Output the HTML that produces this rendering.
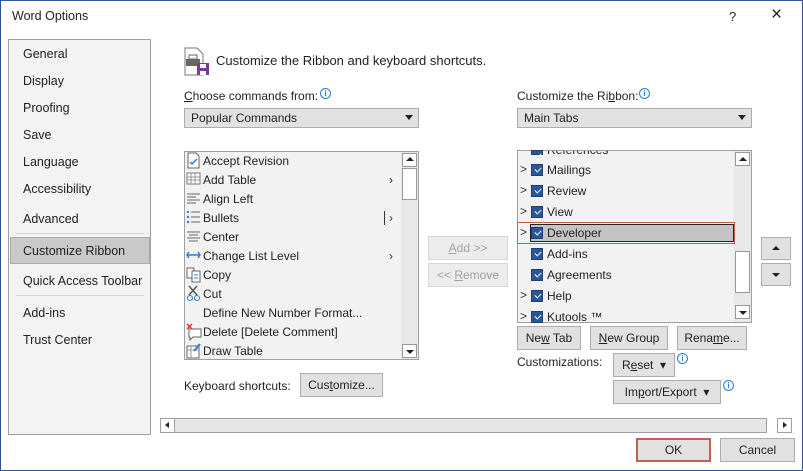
<!DOCTYPE html>
<html><head><meta charset="utf-8"><style>
*{box-sizing:border-box;margin:0;padding:0}
body{width:803px;height:471px;background:#fff;font-family:"Liberation Sans",sans-serif;font-size:12px;color:#222;position:relative;overflow:hidden}
.a{position:absolute}
.win{left:0;top:0;width:803px;height:471px;border:1px solid #2b579a}
.btn{position:absolute;background:#e1e1e1;border:1px solid #adadad;text-align:center;font-size:12px;color:#222;display:flex;align-items:center;justify-content:center;white-space:pre}
.dis{color:#a0a0a0;background:#ececec;border-color:#d8d8d8}
.side div.it{position:absolute;left:14px;font-size:12.5px}
.list{background:#f2f2f2;border:1px solid #a0a0a0}
.row{position:absolute;height:19px;line-height:19px;font-size:12px}
.cb{position:absolute;width:12px;height:12px;background:#2b579a;border:1px solid #1d3f73}
.cb:after{content:"";position:absolute;left:3px;top:2px;width:5px;height:3px;border-left:1.5px solid #fff;border-bottom:1.5px solid #fff;transform:rotate(-45deg)}
.chev{position:absolute;font-size:12px;color:#333}
.sb{position:absolute;background:#e8e8e8}
.arr{position:absolute;background:#fff;border:1px solid #999;width:15px;height:14px}
.info{position:absolute;width:11px;height:11px;border:1px solid #2d7dd2;border-radius:50%;color:#2d7dd2;font-size:8px;line-height:9px;text-align:center;font-weight:bold}
u{text-decoration:underline}
</style></head><body>
<div class="a win"></div>
<div class="a" style="left:12px;top:9px;font-size:12.5px">Word Options</div>
<div class="a" style="left:729px;top:9px;font-size:13px">?</div>
<div class="a" style="left:771px;top:4px;font-size:19px;font-weight:300">×</div>

<div class="a side" style="left:8px;top:39px;width:143px;height:396px;background:#f3f3f3;border:1px solid #a0a0a0">
<div class="it" style="top:7px">General</div>
<div class="it" style="top:34px">Display</div>
<div class="it" style="top:61px">Proofing</div>
<div class="it" style="top:88px">Save</div>
<div class="it" style="top:115px">Language</div>
<div class="it" style="top:142px">Accessibility</div>
<div class="it" style="top:172px">Advanced</div>
<div class="a" style="left:7px;top:193px;width:128px;height:1px;background:#d4d4d4"></div>
<div class="a" style="left:1px;top:197px;width:140px;height:27px;background:#c9c9c9;border:1px solid #aaa"></div>
<div class="it" style="top:204px">Customize Ribbon</div>
<div class="it" style="top:234px">Quick Access Toolbar</div>
<div class="a" style="left:7px;top:255px;width:128px;height:1px;background:#d4d4d4"></div>
<div class="it" style="top:266px">Add-ins</div>
<div class="it" style="top:293px">Trust Center</div>
</div>

<svg class="a" style="left:184px;top:47px" width="28" height="30" viewBox="0 0 28 30"><path d="M1 1h12l6 6v21H1z" fill="#fff" stroke="#777"/><rect x="2" y="12" width="14" height="7" fill="#666"/><rect x="5" y="8" width="8" height="4" fill="#fff" stroke="#666"/><rect x="13" y="16" width="12" height="12" fill="#7a3a9a"/><rect x="16" y="17" width="6" height="4" fill="#fff"/><rect x="16" y="24" width="6" height="4" fill="#fff"/></svg>
<div class="a" style="left:216px;top:53px;font-size:13px">Customize the Ribbon and keyboard shortcuts.</div>

<div class="a" style="left:184px;top:89px"><u>C</u>hoose commands from:</div>
<div class="info" style="left:320px;top:88px">i</div>
<div class="btn" style="left:184px;top:108px;width:235px;height:20px;justify-content:flex-start;padding-left:6px">Popular Commands</div>
<div class="a" style="left:405px;top:115px;border:4px solid transparent;border-top:5px solid #222"></div>

<div class="a list" style="left:184px;top:151px;width:235px;height:209px"></div>
<div class="sb" style="left:401px;top:152px;width:17px;height:207px"></div>
<div class="arr" style="left:402px;top:153px"></div><div class="a" style="left:406px;top:157px;border:4px solid transparent;border-bottom:4px solid #222;border-top:0"></div>
<div class="a" style="left:402px;top:168px;width:15px;height:32px;background:#fff;border:1px solid #999"></div>
<div class="arr" style="left:402px;top:344px"></div><div class="a" style="left:406px;top:350px;border:4px solid transparent;border-top:4px solid #222;border-bottom:0"></div>

<div class="row" style="left:203px;top:152px">Accept Revision</div>
<div class="row" style="left:203px;top:171px">Add Table</div>
<div class="row" style="left:203px;top:190px">Align Left</div>
<div class="row" style="left:203px;top:209px">Bullets</div>
<div class="row" style="left:203px;top:228px">Center</div>
<div class="row" style="left:203px;top:247px">Change List Level</div>
<div class="row" style="left:203px;top:266px">Copy</div>
<div class="row" style="left:203px;top:285px">Cut</div>
<div class="row" style="left:203px;top:304px">Define New Number Format...</div>
<div class="row" style="left:203px;top:323px">Delete [Delete Comment]</div>
<div class="row" style="left:203px;top:342px">Draw Table</div>
<div class="chev" style="left:389px;top:173px">›</div>
<div class="a" style="left:384px;top:211px;width:1px;height:14px;background:#333"></div>
<div class="chev" style="left:389px;top:211px">›</div>
<div class="chev" style="left:389px;top:249px">›</div>
<svg class="a" style="left:186px;top:152px" width="16" height="208" viewBox="0 0 16 208">
<path d="M2 1h8l3 3v12H2z" fill="#fff" stroke="#666"/><path d="M4 10l2 2 5-5" stroke="#2d7dd2" fill="none" stroke-width="1.5"/>
<rect x="1" y="21" width="13" height="11" fill="#fff" stroke="#777"/><path d="M1 25h13M1 28h13M5 21v11M9 21v11" stroke="#999"/>
<path d="M1 42h13M1 45h9M1 48h13M1 51h9" stroke="#666"/>
<circle cx="2" cy="60" r="1.2" fill="#2d7dd2"/><circle cx="2" cy="65" r="1.2" fill="#2d7dd2"/><circle cx="2" cy="70" r="1.2" fill="#2d7dd2"/><path d="M5 60h9M5 65h9M5 70h9" stroke="#666"/>
<path d="M1 80h13M3 83h9M1 86h13M3 89h9" stroke="#666"/>
<path d="M1 103h13M3 100l-2 3 2 3M12 100l2 3-2 3" stroke="#2d7dd2" fill="none" stroke-width="1.5"/>
<rect x="1" y="116" width="7" height="10" fill="#fff" stroke="#666"/><rect x="6" y="119" width="8" height="11" fill="#fff" stroke="#666"/><path d="M8 123h4M8 126h4" stroke="#2d7dd2"/>
<path d="M3 134l8 9M11 134l-8 9" stroke="#555" stroke-width="1.5"/><circle cx="4" cy="146" r="2.5" fill="none" stroke="#2d7dd2"/><circle cx="11" cy="146" r="2.5" fill="none" stroke="#2d7dd2"/>
<path d="M3 177h12v8H7l-3 3v-3H3z" fill="#fff" stroke="#666"/><path d="M1 172l5 5M6 172l-5 5" stroke="#e03a2a" stroke-width="1.5"/>
<rect x="1" y="194" width="12" height="12" fill="#fff" stroke="#666"/><path d="M1 198h12M5 194v12" stroke="#999"/><path d="M8 199l6-7" stroke="#2d7dd2" stroke-width="2"/>
</svg>

<div class="btn dis" style="left:428px;top:236px;width:80px;height:24px"><span><u>A</u>dd &gt;&gt;</span></div>
<div class="btn dis" style="left:428px;top:263px;width:80px;height:24px"><span>&lt;&lt; <u>R</u>emove</span></div>

<div class="a" style="left:517px;top:89px">Customize the Ri<u>b</u>bon:</div>
<div class="info" style="left:639px;top:88px">i</div>
<div class="btn" style="left:517px;top:108px;width:235px;height:20px;justify-content:flex-start;padding-left:6px">Main Tabs</div>
<div class="a" style="left:738px;top:115px;border:4px solid transparent;border-top:5px solid #222"></div>

<div class="a list" style="left:517px;top:150px;width:235px;height:173px;overflow:hidden">
<div class="row" style="left:29px;top:-10px">References</div>
</div>
<div class="sb" style="left:734px;top:151px;width:17px;height:171px"></div>
<div class="arr" style="left:735px;top:152px"></div><div class="a" style="left:739px;top:157px;border:4px solid transparent;border-bottom:4px solid #222;border-top:0"></div>
<div class="a" style="left:735px;top:251px;width:15px;height:42px;background:#fff;border:1px solid #999"></div>
<div class="arr" style="left:735px;top:305px"></div><div class="a" style="left:739px;top:311px;border:4px solid transparent;border-top:4px solid #222;border-bottom:0"></div>

<div class="a" style="left:517px;top:222px;width:218px;height:22px;border:1px solid #c0604d"></div>
<div class="a" style="left:530px;top:224px;width:204px;height:18px;background:#c4c4c4;border:1px solid #222"></div>
<div class="cb" style="left:531px;top:150px;height:5px"></div>
<div class="chev" style="left:520px;top:162px">&gt;</div><div class="cb" style="left:531px;top:164px"></div><div class="row" style="left:547px;top:161px">Mailings</div>
<div class="chev" style="left:520px;top:183px">&gt;</div><div class="cb" style="left:531px;top:185px"></div><div class="row" style="left:547px;top:182px">Review</div>
<div class="chev" style="left:520px;top:204px">&gt;</div><div class="cb" style="left:531px;top:206px"></div><div class="row" style="left:547px;top:203px">View</div>
<div class="chev" style="left:520px;top:225px">&gt;</div><div class="cb" style="left:531px;top:227px"></div><div class="row" style="left:547px;top:224px">Developer</div>
<div class="cb" style="left:531px;top:248px"></div><div class="row" style="left:547px;top:245px">Add-ins</div>
<div class="cb" style="left:531px;top:269px"></div><div class="row" style="left:547px;top:266px">Agreements</div>
<div class="chev" style="left:520px;top:288px">&gt;</div><div class="cb" style="left:531px;top:290px"></div><div class="row" style="left:547px;top:287px">Help</div>
<div class="chev" style="left:520px;top:309px">&gt;</div><div class="cb" style="left:531px;top:311px"></div><div class="row" style="left:547px;top:308px">Kutools ™</div>

<div class="btn" style="left:761px;top:237px;width:30px;height:23px"></div><div class="a" style="left:772px;top:246px;border:4px solid transparent;border-bottom:4px solid #222;border-top:0"></div>
<div class="btn" style="left:761px;top:263px;width:30px;height:23px"></div><div class="a" style="left:772px;top:273px;border:4px solid transparent;border-top:4px solid #222;border-bottom:0"></div>

<div class="btn" style="left:517px;top:326px;width:64px;height:24px"><span>Ne<u>w</u> Tab</span></div>
<div class="btn" style="left:590px;top:326px;width:78px;height:24px"><span><u>N</u>ew Group</span></div>
<div class="btn" style="left:677px;top:326px;width:70px;height:24px"><span>Rena<u>m</u>e...</span></div>
<div class="a" style="left:517px;top:355px">Customizations:</div>
<div class="btn" style="left:613px;top:353px;width:62px;height:24px"><span>R<u>e</u>set  ▾</span></div>
<div class="info" style="left:677px;top:353px">i</div>
<div class="btn" style="left:613px;top:380px;width:108px;height:24px"><span>Im<u>p</u>ort/Export  ▾</span></div>
<div class="info" style="left:723px;top:380px">i</div>

<div class="a" style="left:184px;top:379px">Keyboard shortcuts:</div>
<div class="btn" style="left:300px;top:373px;width:83px;height:24px"><span>Cus<u>t</u>omize...</span></div>

<div class="a" style="left:160px;top:418px;width:607px;height:15px;background:#e6e6e6;border:1px solid #a0a0a0"></div>
<div class="a" style="left:161px;top:419px;width:14px;height:13px;background:#fff;border-right:1px solid #a0a0a0"></div>
<div class="a" style="left:165px;top:422px;border:3.5px solid transparent;border-right:4px solid #222;border-left:0"></div>
<div class="a" style="left:777px;top:418px;width:15px;height:15px;background:#fff;border:1px solid #a0a0a0"></div>
<div class="a" style="left:783px;top:422px;border:3.5px solid transparent;border-left:4px solid #222;border-right:0"></div>

<div class="btn" style="left:636px;top:438px;width:75px;height:24px;border:2px solid #c0604d">OK</div>
<div class="btn" style="left:720px;top:438px;width:75px;height:24px">Cancel</div>
</body></html>
